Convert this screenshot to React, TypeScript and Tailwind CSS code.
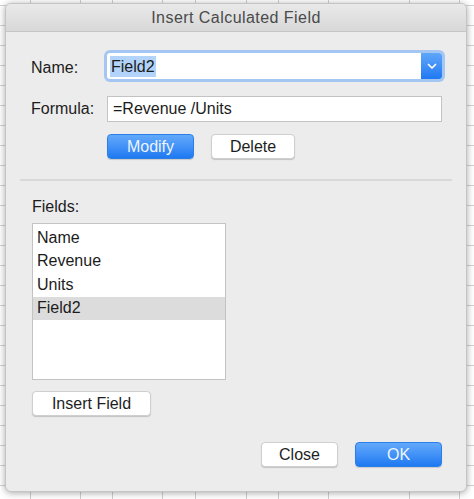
import React from "react";

const colWidths = [31, 50, 32, 50, 33, 51, 32, 50, 81, 50, 40];
const font = { fontFamily: '"Liberation Sans", Arial, sans-serif' };

function WhiteButton({ label, w }: { label: string; w: string }) {
  return (
    <div
      className={`${w} h-[25px] flex items-center justify-center rounded-[4px] bg-white border border-[#cfcfcf] shadow-[0_1px_1px_rgba(0,0,0,0.18)] text-[16px] text-[#1e1e1e]`}
    >
      {label}
    </div>
  );
}

function BlueButton({ label, w }: { label: string; w: string }) {
  return (
    <div
      className={`${w} h-[25px] flex items-center justify-center rounded-[4px] bg-gradient-to-b from-[#62a9fb] to-[#1d79f2] border border-[#2a7fe8] shadow-[0_1px_1px_rgba(0,0,0,0.15)] text-[16px] text-[#eef5ff]`}
    >
      {label}
    </div>
  );
}

export default function App() {
  return (
    <div
      className="relative w-[474px] h-[499px] overflow-hidden bg-white font-['Liberation_Sans',Arial,sans-serif]"
      style={font}
    >
      {/* spreadsheet grid behind the dialog */}
      <div className="flex h-full w-full bg-[linear-gradient(#d2d2d2_1px,transparent_1px)] bg-[length:100%_20px] bg-[position:0_5px]">
        {colWidths.map((w, i) => (
          <div
            key={i}
            className="h-full shrink-0 border-r border-[#cfcfcf]"
            style={{ width: w }}
          />
        ))}
      </div>

      {/* dialog */}
      <div className="absolute left-[5px] top-[3px] w-[462px] h-[489px] flex flex-col rounded-[6px] bg-[#ececec] border border-[#c4c4c4] shadow-[0_1px_7px_rgba(0,0,0,0.35)] overflow-hidden">
        <div className="h-[28px] shrink-0 flex items-center justify-center bg-gradient-to-b from-[#e9e9e9] to-[#d8d8d8] border-b border-[#c6c6c6] text-[16px] tracking-[0.45px] text-[#4a4a4a]">
          Insert Calculated Field
        </div>

        <div className="flex flex-col pl-[25px] pr-[24px]">
          {/* Name row */}
          <div className="mt-[21px] flex items-center h-[26px]">
            <div className="w-[76px] text-[16px] text-[#1c1c1c] pt-[3px]">Name:</div>
            <div className="flex-1 h-[26px] flex rounded-[3px] bg-white ring-[3px] ring-[#a3c6f2]">
              <div className="flex-1 flex items-center pl-[3px]">
                <span className="bg-[#b2d3fa] text-[16px] text-[#1c1c1c] leading-[21px] px-[1px]">
                  Field2
                </span>
              </div>
              <div className="w-[21px] h-full flex items-center justify-center rounded-r-[3px] bg-gradient-to-b from-[#5fa6fa] to-[#1e79f2]">
                <svg width="10" height="7" viewBox="0 0 10 7">
                  <path
                    d="M1.5 1.5 L5 5 L8.5 1.5"
                    fill="none"
                    stroke="white"
                    strokeWidth="1.7"
                    strokeLinecap="round"
                    strokeLinejoin="round"
                  />
                </svg>
              </div>
            </div>
          </div>

          {/* Formula row */}
          <div className="mt-[17px] flex items-center h-[26px]">
            <div className="w-[76px] text-[16px] text-[#1c1c1c]">Formula:</div>
            <div className="flex-1 h-[26px] flex items-center pl-[5px] bg-white border border-[#c3c3c3] text-[16px] text-[#1c1c1c]">
              =Revenue /Units
            </div>
          </div>

          {/* Modify / Delete */}
          <div className="mt-[12px] ml-[76px] flex gap-[17px]">
            <BlueButton label="Modify" w="w-[87px]" />
            <WhiteButton label="Delete" w="w-[84px]" />
          </div>
        </div>

        {/* separator */}
        <div className="mt-[20px] mx-[14px] h-[2px] bg-[#d9d9d9]" />

        <div className="flex flex-col pl-[26px] pr-[24px]">
          <div className="mt-[16px] h-[20px] flex items-center text-[16px] text-[#1c1c1c]">
            Fields:
          </div>
          <div className="mt-[6px] w-[194px] h-[157px] bg-white border border-[#c3c3c3] pt-[2px] flex flex-col">
            {["Name", "Revenue", "Units", "Field2"].map((f) => (
              <div
                key={f}
                className={`h-[23.5px] flex items-center pl-[4px] text-[16px] text-[#1c1c1c] ${
                  f === "Field2" ? "bg-[#dcdcdc]" : ""
                }`}
              >
                {f}
              </div>
            ))}
          </div>
          <div className="mt-[11px]">
            <WhiteButton label="Insert Field" w="w-[119px]" />
          </div>
          <div className="mt-[26px] flex justify-end gap-[17px]">
            <WhiteButton label="Close" w="w-[77px]" />
            <BlueButton label="OK" w="w-[87px]" />
          </div>
        </div>
      </div>
    </div>
  );
}
